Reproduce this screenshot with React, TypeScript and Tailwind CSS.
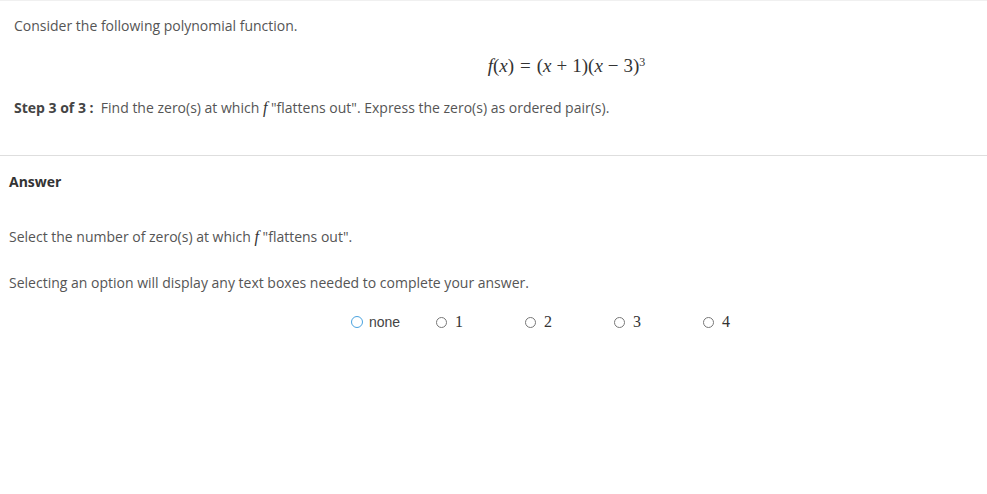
import { useState } from "react";

const options = ["none", "1", "2", "3", "4"];

function Radio({ label, checked, focused, onSelect }: { label: string; checked: boolean; focused: boolean; onSelect: () => void }) {
  const isMath = label !== "none";
  return (
    <label onClick={onSelect} className={`flex cursor-pointer items-center ${isMath ? "w-[89px] gap-[8px]" : "w-[85px] gap-[6px]"}`}>
      <span
        className={
          focused
            ? "box-border h-[12px] w-[12px] rounded-full border-[1.5px] border-[#4aa3df] bg-white"
            : "box-border h-[11px] w-[11px] rounded-full border border-[#777] bg-white"
        }
      >
        {checked && <span className="m-[2px] block h-[6px] w-[6px] rounded-full bg-[#333]" />}
      </span>
      <span
        className={
          isMath
            ? "font-['Liberation_Serif',serif] text-[16px] text-[#333]"
            : "font-['Liberation_Sans',sans-serif] text-[14px] text-[#444]"
        }
      >
        {label}
      </span>
    </label>
  );
}

export default function App() {
  const [selected, setSelected] = useState<string | null>(null);

  return (
    <div className="h-[494px] w-[987px] overflow-hidden bg-white font-['Open_Sans',sans-serif] text-[14px] text-[#555]">
      <div className="border-t border-[#f0f0f0] px-[14px] pt-[15px]">
        <p className="leading-[19px]">Consider the following polynomial function.</p>
        <div className="mt-[20px] flex justify-center pl-[146px] font-['Liberation_Serif',serif] text-[19px] leading-[22px] text-[#333]">
          <span>
            <i>f</i>(<i>x</i>)<span className="mx-[6px]">=</span>(<i>x</i>
            <span className="mx-[5px]">+</span>1)(<i>x</i>
            <span className="mx-[5px]">−</span>3)<sup className="text-[12px]">3</sup>
          </span>
        </div>
        <p className="mt-[21px] leading-[19px]">
          <span className="font-bold text-[#444]">Step 3 of 3 :</span>&nbsp; Find the zero(s) at which{" "}
          <i className="font-['Liberation_Serif',serif] text-[16px] text-[#333]">f</i> "flattens out". Express the zero(s) as ordered
          pair(s).
        </p>
      </div>

      <div className="mt-[38px] border-t border-[#dedede] px-[9px] pt-[16px]">
        <p className="font-bold leading-[19px] text-[#333]">Answer</p>
        <p className="mt-[36px] leading-[19px]">
          Select the number of zero(s) at which{" "}
          <i className="font-['Liberation_Serif',serif] text-[16px] text-[#333]">f</i> "flattens out".
        </p>
        <p className="mt-[27px] leading-[19px]">Selecting an option will display any text boxes needed to complete your answer.</p>
        <div className="mt-[18px] flex pl-[342px]">
          {options.map((o, i) => (
            <Radio key={o} label={o} checked={selected === o} focused={i === 0} onSelect={() => setSelected(o)} />
          ))}
        </div>
      </div>
    </div>
  );
}
